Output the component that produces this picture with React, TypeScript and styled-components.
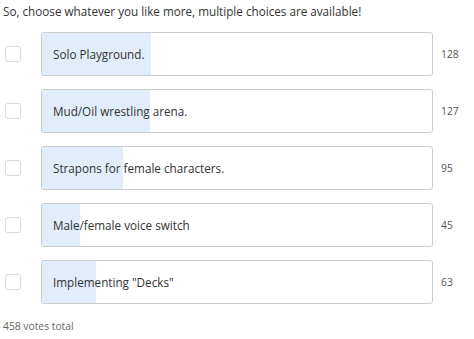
import React from 'react';
import styled, { createGlobalStyle } from 'styled-components';

const GlobalStyle = createGlobalStyle`
  body {
    margin: 0;
    background: #ffffff;
    font-family: "Open Sans", "Noto Sans", Arial, sans-serif;
    color: #333333;
  }
`;

const Poll = styled.div`
  width: 474px;
  padding: 3px 0 0 3px;
  box-sizing: border-box;
`;

const Question = styled.div`
  font-size: 11.7px;
  line-height: 16px;
  color: #333333;
  height: 29px;
`;

const List = styled.div`
  display: flex;
  flex-direction: column;
  gap: 13px;
`;

const Row = styled.label`
  display: flex;
  align-items: center;
  padding-left: 2px;
`;

const Check = styled.span`
  width: 16px;
  height: 16px;
  box-sizing: border-box;
  border: 1px solid #d9d9d9;
  border-radius: 3px;
  background: #fff;
  flex-shrink: 0;
  margin-right: 20px;
`;

const Bar = styled.div`
  position: relative;
  width: 392px;
  height: 44px;
  box-sizing: border-box;
  border: 1px solid #cccccc;
  border-radius: 3px;
  overflow: hidden;
  display: flex;
  align-items: center;
  background: #ffffff;
`;

const Fill = styled.div`
  position: absolute;
  left: 0;
  top: 0;
  bottom: 0;
  background: #e1edfa;
`;

const Label = styled.span`
  position: relative;
  padding-left: 11px;
  font-size: 11.7px;
  color: #333333;
`;

const Count = styled.span`
  margin-left: 8px;
  font-size: 10.3px;
  color: #555555;
`;

const Total = styled.div`
  margin-top: 15px;
  font-size: 10.3px;
  color: #666666;
`;

const options = [
  { label: 'Solo Playground.', votes: 128 },
  { label: 'Mud/Oil wrestling arena.', votes: 127 },
  { label: 'Strapons for female characters.', votes: 95 },
  { label: 'Male/female voice switch', votes: 45 },
  { label: 'Implementing "Decks"', votes: 63 },
];

const total = options.reduce((s, o) => s + o.votes, 0);

export default function App() {
  return (
    <>
      <GlobalStyle />
      <Poll>
        <Question>So, choose whatever you like more, multiple choices are available!</Question>
        <List>
          {options.map((o) => (
            <Row key={o.label}>
              <Check />
              <Bar>
                <Fill style={{ width: `${(o.votes / total) * 100}%` }} />
                <Label>{o.label}</Label>
              </Bar>
              <Count>{o.votes}</Count>
            </Row>
          ))}
        </List>
        <Total>{total} votes total</Total>
      </Poll>
    </>
  );
}
